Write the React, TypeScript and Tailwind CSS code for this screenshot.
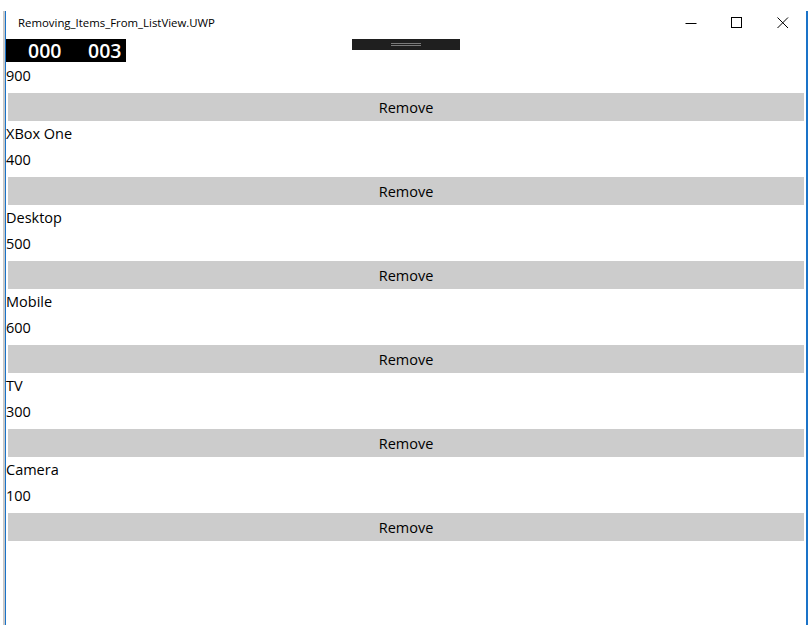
import React from 'react';

const items = [
  { name: '', price: '900', hideName: true },
  { name: 'XBox One', price: '400' },
  { name: 'Desktop', price: '500' },
  { name: 'Mobile', price: '600' },
  { name: 'TV', price: '300' },
  { name: 'Camera', price: '100' },
];

const font = { fontFamily: '"Open Sans", "Noto Sans", sans-serif' };

function CaptionButtons() {
  return (
    <div className="flex h-full">
      <div className="flex w-[46px] items-center justify-center">
        <svg width="12" height="12" viewBox="0 0 12 12">
          <path d="M0.5 6.5h11" stroke="#000" strokeWidth="1" />
        </svg>
      </div>
      <div className="flex w-[46px] items-center justify-center">
        <svg width="12" height="12" viewBox="0 0 12 12">
          <rect x="0.5" y="0.5" width="10" height="10" fill="none" stroke="#000" strokeWidth="1" />
        </svg>
      </div>
      <div className="flex w-[46px] items-center justify-center">
        <svg width="12" height="12" viewBox="0 0 12 12">
          <path d="M0.5 0.5l10.5 10.5M11 0.5L0.5 11" stroke="#000" strokeWidth="1" />
        </svg>
      </div>
    </div>
  );
}

export default function App() {
  return (
    <div className="flex h-[625px] w-[812px] overflow-hidden bg-white" style={font}>
      <div className="w-[3px]" />
      <div className="mt-[11px] w-[2px] bg-[#c9c9c9]" />
      <div className="mt-[11px] w-px bg-[#1a73c8]" />

      <div className="flex w-[800px] flex-col">
        {/* title bar */}
        <div className="flex h-[39px] items-center justify-between">
          <span className="pl-[12px] pt-[6px] text-[11.4px] text-black">Removing_Items_From_ListView.UWP</span>
          <div className="h-full pt-[6px]">
            <CaptionButtons />
          </div>
        </div>

        {/* frame counter strip */}
        <div className="relative h-[23px]">
          <div className="flex h-[23px] w-[120px] items-center bg-black pl-[22px] text-[19.5px] font-semibold leading-none text-white">
            <span className="w-[60px]">000</span>
            <span>003</span>
          </div>
          <div className="absolute left-[346px] top-0 flex h-[11px] w-[108px] flex-col items-center justify-center gap-[1px] bg-[#1f1f1f]">
            <div className="h-px w-[30px] bg-[#7a7a7a]" />
            <div className="h-px w-[30px] bg-[#7a7a7a]" />
          </div>
        </div>

        {/* list */}
        <div className="flex flex-col">
          {items.map((it, i) => (
            <div key={i} className="flex flex-col">
              {!it.hideName && (
                <div className="flex h-[25px] items-center pt-[1px] text-[14.5px] text-black">{it.name}</div>
              )}
              <div className="flex h-[25px] items-center pt-[3px] text-[14.5px] text-black">{it.price}</div>
              <button
                type="button"
                className="ml-[2px] mr-[2px] mt-[6px] flex h-[28px] items-center justify-center bg-[#cccccc] pt-[2px] text-[14.5px] text-black"
              >
                Remove
              </button>
            </div>
          ))}
        </div>
      </div>

      <div className="mt-[11px] w-[2px] bg-[#1a73c8]" />
      <div className="flex-1" />
    </div>
  );
}
